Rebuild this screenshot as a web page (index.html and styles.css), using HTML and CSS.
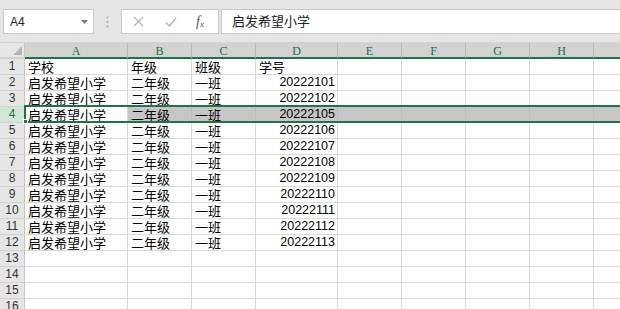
FILE: index.html
```html
<!DOCTYPE html>
<html lang="zh">
<head>
<meta charset="utf-8">
<link rel="stylesheet" href="styles.css">
</head>
<body>
<div class="toolbar">
  <div class="namebox">
    <span class="ref">A4</span>
    <svg class="drop" width="7" height="4" viewBox="0 0 7 4"><path d="M0 0h7L3.5 4z" fill="#7a7a7a"/></svg>
  </div>
  <div class="grip">
    <svg width="3" height="12" viewBox="0 0 3 12"><circle cx="1.5" cy="1.5" r="1" fill="#a8a8a8"/><circle cx="1.5" cy="6" r="1" fill="#a8a8a8"/><circle cx="1.5" cy="10.5" r="1" fill="#a8a8a8"/></svg>
  </div>
  <div class="fxbtns">
    <svg class="ico" width="11" height="11" viewBox="0 0 11 11"><path d="M1 1l9 9M10 1l-9 9" stroke="#b4b4b4" stroke-width="1.2" fill="none"/></svg>
    <svg class="ico" width="12" height="10" viewBox="0 0 12 10"><path d="M1 5.5l3.5 3.5L11 1" stroke="#b4b4b4" stroke-width="1.3" fill="none"/></svg>
    <span class="fx">f<sub>x</sub></span>
  </div>
  <div class="formula">启发希望小学</div>
</div>

<div class="sheet">
  <div class="grid">
    <div class="corner"><svg width="9" height="9" viewBox="0 0 9 9"><path d="M9 0v9H0z" fill="#b6b6b6"/></svg></div>
    <div class="ch">A</div><div class="ch">B</div><div class="ch">C</div><div class="ch">D</div><div class="ch">E</div><div class="ch">F</div><div class="ch">G</div><div class="ch">H</div><div class="ch"></div>

    <div class="rh">1</div><div class="c">学校</div><div class="c">年级</div><div class="c">班级</div><div class="c">学号</div><div class="c"></div><div class="c"></div><div class="c"></div><div class="c"></div><div class="c"></div>
    <div class="rh">2</div><div class="c">启发希望小学</div><div class="c">二年级</div><div class="c">一班</div><div class="c n">20222101</div><div class="c"></div><div class="c"></div><div class="c"></div><div class="c"></div><div class="c"></div>
    <div class="rh">3</div><div class="c">启发希望小学</div><div class="c">二年级</div><div class="c">一班</div><div class="c n">20222102</div><div class="c"></div><div class="c"></div><div class="c"></div><div class="c"></div><div class="c"></div>
    <div class="rh sel">4</div><div class="c active">启发希望小学</div><div class="c hl">二年级</div><div class="c hl">一班</div><div class="c n hl">20222105</div><div class="c hl"></div><div class="c hl"></div><div class="c hl"></div><div class="c hl"></div><div class="c hl"></div>
    <div class="rh">5</div><div class="c">启发希望小学</div><div class="c">二年级</div><div class="c">一班</div><div class="c n">20222106</div><div class="c"></div><div class="c"></div><div class="c"></div><div class="c"></div><div class="c"></div>
    <div class="rh">6</div><div class="c">启发希望小学</div><div class="c">二年级</div><div class="c">一班</div><div class="c n">20222107</div><div class="c"></div><div class="c"></div><div class="c"></div><div class="c"></div><div class="c"></div>
    <div class="rh">7</div><div class="c">启发希望小学</div><div class="c">二年级</div><div class="c">一班</div><div class="c n">20222108</div><div class="c"></div><div class="c"></div><div class="c"></div><div class="c"></div><div class="c"></div>
    <div class="rh">8</div><div class="c">启发希望小学</div><div class="c">二年级</div><div class="c">一班</div><div class="c n">20222109</div><div class="c"></div><div class="c"></div><div class="c"></div><div class="c"></div><div class="c"></div>
    <div class="rh">9</div><div class="c">启发希望小学</div><div class="c">二年级</div><div class="c">一班</div><div class="c n">20222110</div><div class="c"></div><div class="c"></div><div class="c"></div><div class="c"></div><div class="c"></div>
    <div class="rh">10</div><div class="c">启发希望小学</div><div class="c">二年级</div><div class="c">一班</div><div class="c n">20222111</div><div class="c"></div><div class="c"></div><div class="c"></div><div class="c"></div><div class="c"></div>
    <div class="rh">11</div><div class="c">启发希望小学</div><div class="c">二年级</div><div class="c">一班</div><div class="c n">20222112</div><div class="c"></div><div class="c"></div><div class="c"></div><div class="c"></div><div class="c"></div>
    <div class="rh">12</div><div class="c">启发希望小学</div><div class="c">二年级</div><div class="c">一班</div><div class="c n">20222113</div><div class="c"></div><div class="c"></div><div class="c"></div><div class="c"></div><div class="c"></div>
    <div class="rh">13</div><div class="c"></div><div class="c"></div><div class="c"></div><div class="c"></div><div class="c"></div><div class="c"></div><div class="c"></div><div class="c"></div><div class="c"></div>
    <div class="rh">14</div><div class="c"></div><div class="c"></div><div class="c"></div><div class="c"></div><div class="c"></div><div class="c"></div><div class="c"></div><div class="c"></div><div class="c"></div>
    <div class="rh">15</div><div class="c"></div><div class="c"></div><div class="c"></div><div class="c"></div><div class="c"></div><div class="c"></div><div class="c"></div><div class="c"></div><div class="c"></div>
    <div class="rh">16</div><div class="c"></div><div class="c"></div><div class="c"></div><div class="c"></div><div class="c"></div><div class="c"></div><div class="c"></div><div class="c"></div><div class="c"></div>
  </div>
  <div class="selbox"></div>
  <div class="handle"></div>
</div>
</body>
</html>
```

FILE: styles.css
```css
* { box-sizing: border-box; }
html, body { margin: 0; padding: 0; }
body {
  width: 620px;
  height: 309px;
  overflow: hidden;
  background: #ffffff;
  font-family: "Noto Sans CJK SC", "Liberation Sans", sans-serif;
}

.toolbar {
  height: 43px;
  background: #e6e6e6;
  display: flex;
  align-items: flex-start;
  padding: 9px 0 0 3px;
  border-bottom: 1px solid #d4d4d4;
}
.namebox {
  width: 91px;
  height: 25px;
  background: #fff;
  border: 1px solid #c8c8c8;
  display: flex;
  align-items: center;
  justify-content: space-between;
  padding: 0 5px 0 6px;
}
.ref {
  font-family: "Liberation Sans", sans-serif;
  font-size: 12px;
  color: #222;
}
.drop { margin-top: 1px; }
.grip {
  width: 27px;
  height: 25px;
  display: flex;
  align-items: center;
  justify-content: center;
}
.fxbtns {
  width: 98px;
  height: 25px;
  background: #fff;
  border: 1px solid #c8c8c8;
  display: flex;
  align-items: center;
  padding-left: 11px;
  gap: 21px;
}
.fx {
  font-family: "Liberation Serif", serif;
  font-style: italic;
  font-size: 14px;
  color: #555;
  margin-left: -2px;
  line-height: 1;
}
.fx sub { font-size: 9px; vertical-align: -1px; }
.formula {
  flex: 1;
  height: 25px;
  margin-left: 2px;
  background: #fff;
  border: 1px solid #c8c8c8;
  border-right: none;
  font-size: 13px;
  line-height: 22px;
  padding-left: 10px;
  color: #222;
}

.sheet { position: relative; }
.grid {
  display: grid;
  grid-template-columns: 25px 103px 64px 64px 82px 64px 64px 64px 64px 40px;
  grid-auto-rows: 16px;
}
.corner {
  background: #e6e6e6;
  border-right: 1px solid #c6c6c6;
  border-bottom: 2px solid #d0d0d0;
  display: flex;
  align-items: flex-end;
  justify-content: flex-end;
  padding: 0 2px 2px 0;
}
.ch {
  background: #d2d2d2;
  border-right: 1px solid #b8b8b8;
  border-bottom: 2px solid #217346;
  color: #217346;
  font-family: "Liberation Serif", serif;
  font-size: 12px;
  line-height: 16px;
  text-align: center;
}
.rh {
  background: #e6e6e6;
  border-right: 1px solid #c6c6c6;
  border-bottom: 1px solid #d2d2d2;
  font-family: "Liberation Sans", sans-serif;
  font-size: 12px;
  line-height: 15px;
  text-align: center;
  color: #333;
}
.rh.sel {
  background: #d3e6db;
  color: #217346;
}
.c {
  border-right: 1px solid #dadada;
  border-bottom: 1px solid #dadada;
  font-size: 13px;
  line-height: 15px;
  padding-left: 3px;
  color: #000;
  white-space: nowrap;
}
.c.n {
  text-align: right;
  padding-right: 2px;
  font-family: "Liberation Sans", sans-serif;
  font-size: 12.5px;
}
.c.hl { background: #c6c6c6; border-right-color: #bdbdbd; }
.c.active { background: #fff; }

.selbox {
  position: absolute;
  left: 24px;
  right: -4px;
  top: 62px;
  height: 18px;
  border: 2px solid #217346;
}
.handle {
  position: absolute;
  left: 23px;
  top: 76px;
  width: 5px;
  height: 5px;
  background: #217346;
  border: 1px solid #fff;
}
```
